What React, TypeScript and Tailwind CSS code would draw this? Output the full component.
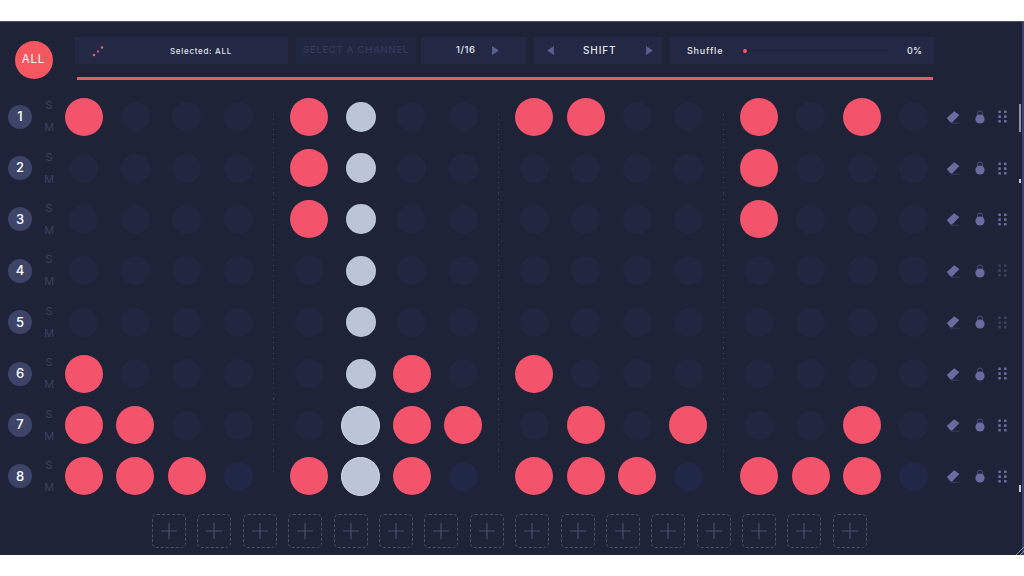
const RED = [
  [0, 4, 8, 9, 12, 14],
  [4, 12],
  [4, 12],
  [],
  [],
  [0, 6, 8],
  [0, 1, 6, 7, 9, 11, 14],
  [0, 1, 2, 4, 6, 8, 9, 10, 12, 13, 14],
];

const font = { fontFamily: "Inter, 'Open Sans', sans-serif" };

function Triangle({ left }: { left?: boolean }) {
  return (
    <svg width="7" height="9" viewBox="0 0 7 9" className="shrink-0">
      <path d={left ? "M7 0V9L0 4.5Z" : "M0 0V9L7 4.5Z"} fill="#59608f" />
    </svg>
  );
}

function Eraser() {
  return (
    <svg width="15" height="14" viewBox="0 0 15 14">
      <path d="M0.8 8 8.2 1.2 13.4 5 6.2 12.6 4.4 12.4Z" fill="#6a6b9e" strokeLinejoin="round" />
      <path d="M5 13.2H13.5" stroke="#3f4468" strokeWidth="0.8" />
    </svg>
  );
}

function Lock() {
  return (
    <svg width="10" height="14" viewBox="0 0 10 14">
      <path d="M2.4 6V3.6a2.6 2.6 0 0 1 5.2 0V6" fill="none" stroke="#4d5078" strokeWidth="1" />
      <circle cx="5" cy="9" r="4.6" fill="#6a6b9e" />
    </svg>
  );
}

function Grip({ dim }: { dim: boolean }) {
  return (
    <svg width="9" height="13" viewBox="0 0 9 13" className={dim ? "opacity-40" : ""}>
      {[0.5, 5.3, 10].flatMap((y) =>
        [0.3, 6].map((x) => <rect key={`${x}-${y}`} x={x} y={y} width="2.6" height="2.6" rx="0.6" fill="#6a6b9e" />),
      )}
    </svg>
  );
}

function Cell({ row, col }: { row: number; col: number }) {
  const red = RED[row].includes(col);
  const light = col === 5;
  const big = light && row >= 6;
  return (
    <div className="flex h-full w-[51.4px] shrink-0 items-center justify-center">
      {red ? (
        <div className="h-[38px] w-[38px] rounded-full bg-[#f4546b]" />
      ) : light ? (
        <div
          className={
            big
              ? "h-[39px] w-[39px] rounded-full border border-[#d5dbe8] bg-[#bcc5d8]"
              : "h-[30px] w-[30px] rounded-full bg-[#bcc5d8]"
          }
        />
      ) : (
        <div className={row === 7 ? "h-[29px] w-[29px] rounded-full bg-[#212746]" : "h-[29px] w-[29px] rounded-full bg-[#22273f]"} />
      )}
    </div>
  );
}

function Separator({ row }: { row: number }) {
  const cls =
    row === 0
      ? "mt-[23px] h-[28.4px]"
      : row === 7
        ? "h-[25px] self-start"
        : "h-full";
  return (
    <div className="flex h-full w-[19.6px] shrink-0 justify-center self-stretch">
      <div className={`w-px bg-[linear-gradient(#393f5e_1px,transparent_1px)] bg-[length:1px_5px] ${cls}`} />
    </div>
  );
}

function Row({ row }: { row: number }) {
  const groups = [0, 1, 2, 3];
  return (
    <div className="flex h-[51.4px] items-center">
      <div className="ml-2 flex h-6 w-6 shrink-0 items-center justify-center rounded-full bg-[#3d4468] text-[13px] font-medium text-white">
        {row + 1}
      </div>
      <div className="ml-2 flex w-[18.3px] shrink-0 flex-col items-center gap-[9px] text-[11px] leading-[13px] text-[#3a4060]">
        <span>S</span>
        <span>M</span>
      </div>
      <div className="flex h-full shrink-0">
        {groups.map((g) => (
          <div key={g} className="flex h-full">
            {[0, 1, 2, 3].map((i) => (
              <Cell key={i} row={row} col={g * 4 + i} />
            ))}
            {g < 3 && <Separator row={row} />}
          </div>
        ))}
      </div>
      <div className="ml-[7px] flex w-[15px] shrink-0 justify-center">
        <Eraser />
      </div>
      <div className="ml-[13.5px] flex w-[10px] shrink-0 justify-center">
        <Lock />
      </div>
      <div className="ml-[13px] flex w-[9px] shrink-0 justify-center">
        <Grip dim={row === 3 || row === 4} />
      </div>
    </div>
  );
}

export default function App() {
  return (
    <div className="h-[576px] w-[1024px] overflow-hidden bg-white" style={font}>
      <div className="h-[21px]" />
      <div className="relative flex h-[534px] border-t border-[#4a5070] bg-[#1f2338]">
        <div className="w-[1019px] shrink-0">
          <div className="flex pt-[15px]">
            <div className="ml-[14.5px] mt-[4px] flex h-[38px] w-[38px] items-center justify-center rounded-full bg-[#f4575f] text-[11.5px] font-normal tracking-[0.8px] text-white">
              ALL
            </div>
            <div className="ml-[22.5px]">
              <div className="flex h-[27px] text-white">
                <div className="flex w-[213px] items-center bg-[#232844]">
                  <svg width="12" height="12" viewBox="0 0 12 12" className="ml-[17px]">
                    <circle cx="2" cy="10" r="1.3" fill="#f4546b" />
                    <circle cx="6" cy="6.5" r="1.3" fill="#c64a72" />
                    <circle cx="10" cy="2.5" r="1.3" fill="#f4546b" />
                  </svg>
                  <span className="ml-[66px] text-[8px] font-medium tracking-[0.7px] text-[#dfe2ea]">Selected: ALL</span>
                </div>
                <div className="ml-2 flex w-[120px] items-center justify-center bg-[#222741] text-[9.5px] font-medium tracking-[0.75px] text-[#343a5a]">
                  SELECT A CHANNEL
                </div>
                <div className="ml-[5px] flex w-[105px] items-center bg-[#232844]">
                  <span className="ml-[35px] text-[9.5px] font-medium tracking-[0.5px] text-[#e4e6ee]">1/16</span>
                  <span className="ml-[17px] flex">
                    <Triangle />
                  </span>
                </div>
                <div className="ml-2 flex w-[128px] items-center bg-[#232844]">
                  <span className="ml-[13px] flex">
                    <Triangle left />
                  </span>
                  <span className="ml-[29px] text-[10px] font-medium tracking-[0.9px] text-[#e4e6ee]">SHIFT</span>
                  <span className="ml-[29px] flex">
                    <Triangle />
                  </span>
                </div>
                <div className="ml-2 flex w-[264px] items-center bg-[#232844] pl-[17px]">
                  <span className="w-[56px] text-[9px] font-medium tracking-[0.8px] text-[#e4e6ee]">Shuffle</span>
                  <div className="relative h-[3px] w-[145px] rounded-full bg-[#20243c]">
                    <div className="absolute -top-[0.5px] left-0 h-1 w-1 rounded-full bg-[#f4546b]" />
                  </div>
                  <span className="ml-[19px] text-[9px] font-medium tracking-[0.3px] text-[#e4e6ee]">0%</span>
                </div>
              </div>
              <div className="ml-[2px] mt-[13px] h-[3px] w-[856px] bg-[#e45c68]" />
            </div>
          </div>
          <div className="mt-[11px]">
            {[0, 1, 2, 3, 4, 5, 6, 7].map((r) => (
              <Row key={r} row={r} />
            ))}
          </div>
          <div className="ml-[152px] mt-[11.8px] flex gap-[11.4px]">
            {Array.from({ length: 16 }).map((_, i) => (
              <div key={i} className="flex h-[34px] w-[34px] shrink-0 items-center justify-center rounded-[5px] border border-dashed border-[#4a4f6c]">
                <svg width="16" height="16" viewBox="0 0 16 16">
                  <path d="M8 0V16M0 8H16" stroke="#4a4f6c" strokeWidth="1.2" />
                </svg>
              </div>
            ))}
          </div>
        </div>
        <div className="relative flex-1">
          <div className="absolute left-0 top-[82px] h-[28px] w-[2px] bg-[#8d93ab]" />
          <div className="absolute left-0 top-[157px] h-[4px] w-[2px] bg-[#c6cad6]" />
          <div className="absolute left-0 top-[463px] h-[7px] w-[2px] bg-[#c6cad6]" />
          <div className="absolute right-0 top-0 h-full w-[2px] bg-[#3a4270]" />
          <svg width="8" height="8" viewBox="0 0 8 8" className="absolute bottom-0 right-0">
            <path d="M0 8 8 0M4 8 8 4" stroke="#8d93ab" strokeWidth="1" />
          </svg>
        </div>
      </div>
    </div>
  );
}
